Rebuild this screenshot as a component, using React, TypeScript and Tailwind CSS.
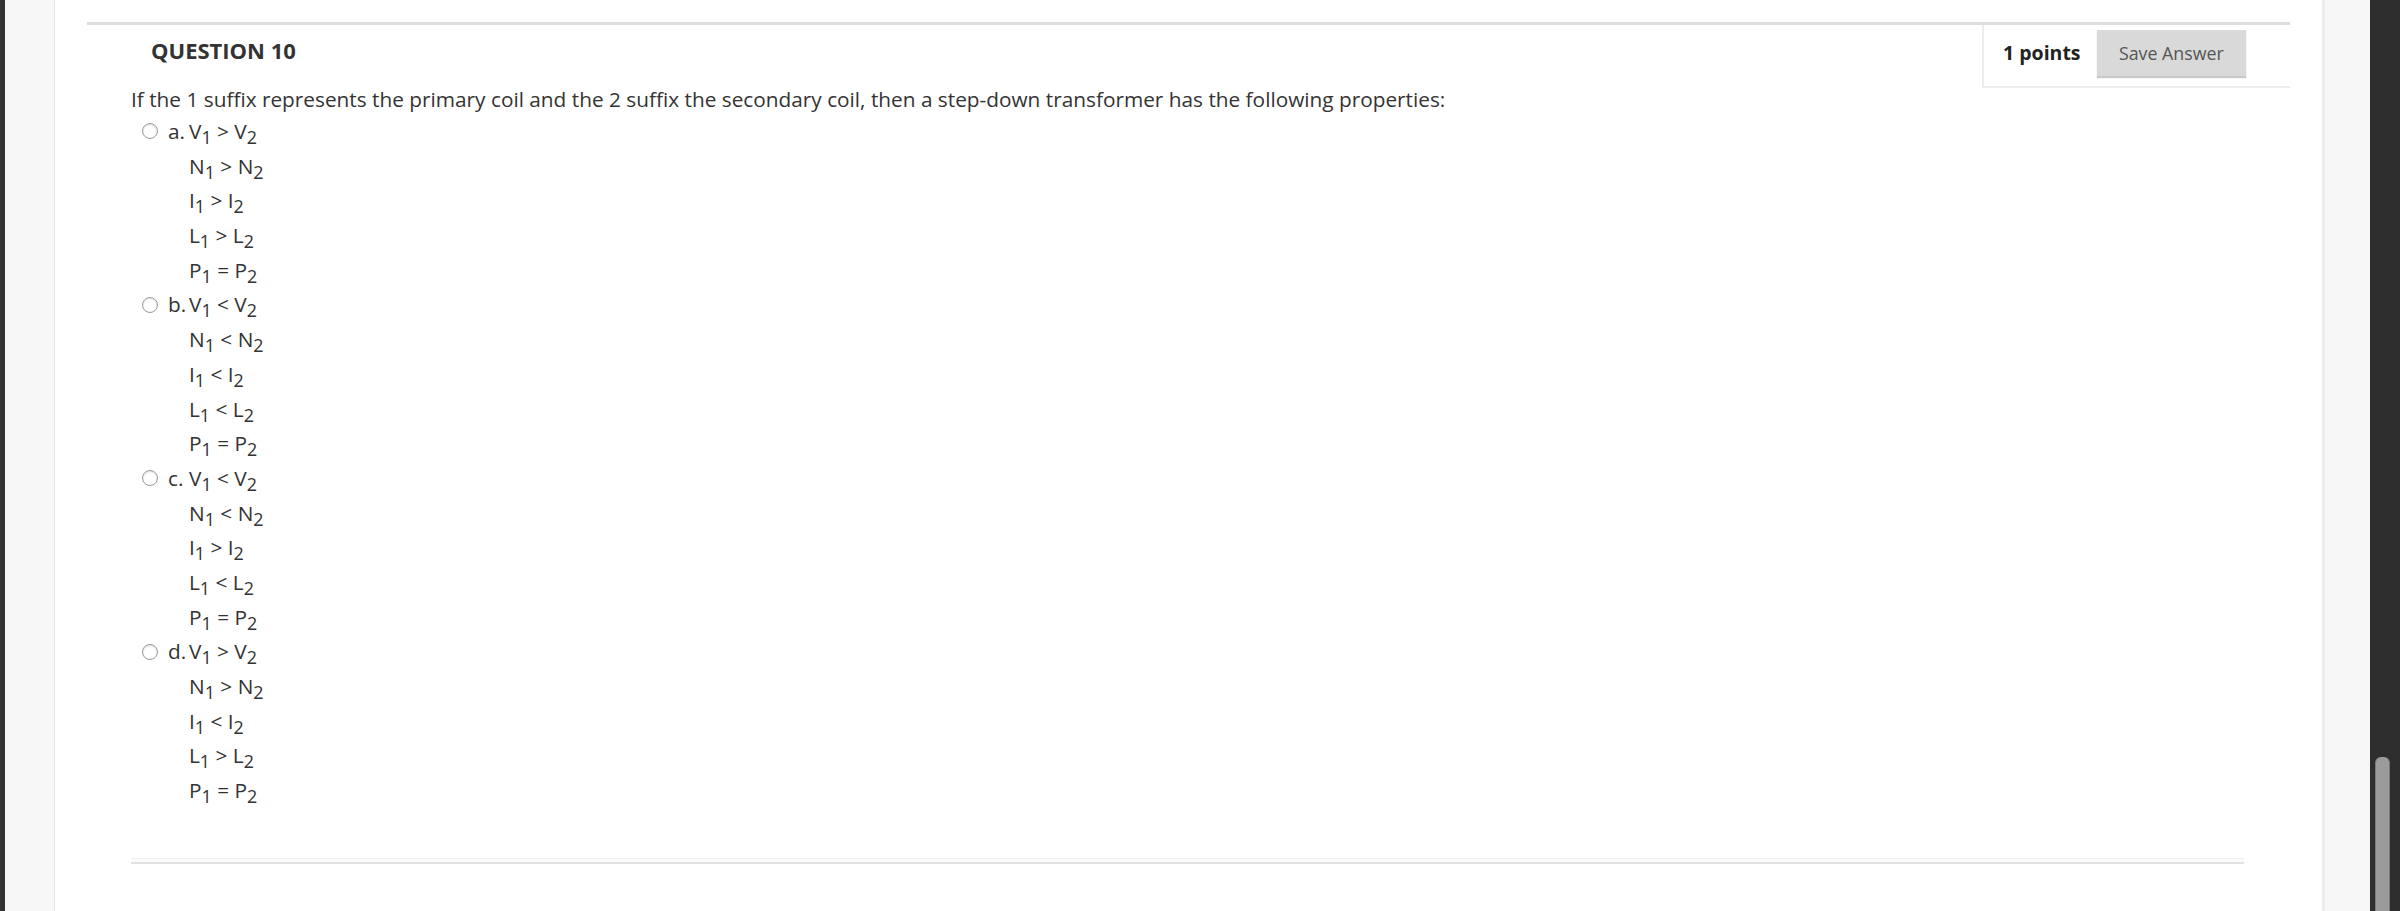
import React from 'react';

type Opt = { label: string; lines: [string, string, string][] };

const options: Opt[] = [
  { label: 'a.', lines: [['V', '>', 'V'], ['N', '>', 'N'], ['I', '>', 'I'], ['L', '>', 'L'], ['P', '=', 'P']] },
  { label: 'b.', lines: [['V', '<', 'V'], ['N', '<', 'N'], ['I', '<', 'I'], ['L', '<', 'L'], ['P', '=', 'P']] },
  { label: 'c.', lines: [['V', '<', 'V'], ['N', '<', 'N'], ['I', '>', 'I'], ['L', '<', 'L'], ['P', '=', 'P']] },
  { label: 'd.', lines: [['V', '>', 'V'], ['N', '>', 'N'], ['I', '<', 'I'], ['L', '>', 'L'], ['P', '=', 'P']] },
];

// subscript digits sit low and fairly large, like the reference
const Sub: React.FC<{ n: string }> = ({ n }) => (
  <span className="relative top-[0.28em] text-[0.86em]">{n}</span>
);

const Line: React.FC<{ parts: [string, string, string] }> = ({ parts }) => (
  <div className="h-[34.7px] leading-[34.7px] whitespace-nowrap">
    {parts[0]}
    <Sub n="1" /> {parts[1]} {parts[2]}
    <Sub n="2" />
  </div>
);

const App: React.FC = () => {
  return (
    <div className="flex h-[911px] w-full overflow-hidden bg-[#f7f7f7] font-['Open_Sans',sans-serif] text-[#333]">
      <div className="w-[5px] shrink-0 bg-[#333]" />
      <div className="w-[50px] shrink-0 bg-[#f7f7f7] border-r border-[#e4e4e4]" />

      <main className="flex-1 bg-white border-r-[3px] border-[#ececec] pt-[22px] px-[32px]">
        <div className="border-t-[3px] border-[#dedede]">
          <div className="flex items-start justify-between h-[60px]">
            <h2 className="pl-[64px] pt-[10px] text-[22px] leading-[30px] font-bold text-[#333]">QUESTION 10</h2>
            <div className="flex items-start h-[63px] w-[308px] border-l-2 border-b-2 border-[#ececec] pt-[5px] pl-[19px] pr-[44px] gap-[16px]">
              <span className="text-[19.5px] leading-[46px] font-bold text-[#222]">1 points</span>
              <button className="h-[46px] flex-1 bg-[#d9d9d9] text-[17.8px] text-[#555] shadow-[0_2px_1px_#c9c9c9]">Save Answer</button>
            </div>
          </div>

          <div className="pl-[44px] pr-[46px]">
            <p className="text-[20.8px] leading-[28px] text-[#333] whitespace-nowrap">
              If the 1 suffix represents the primary coil and the 2 suffix the secondary coil, then a step-down transformer has the following properties:
            </p>

            <div className="text-[20.8px] text-[#333] mt-[1px]">
              {options.map((o) => (
                <div key={o.label} className="flex items-start">
                  <div className="h-[34.7px] flex items-center pl-[11px] pr-[10px]">
                    <span className="block w-[16px] h-[16px] rounded-full border border-[#9a9a9a] bg-white shadow-[inset_0_1px_2px_#ddd]" />
                  </div>
                  <div className="w-[21px] h-[34.7px] leading-[34.7px]">{o.label}</div>
                  <div>
                    {o.lines.map((l, i) => (
                      <Line key={i} parts={l} />
                    ))}
                  </div>
                </div>
              ))}
            </div>

            <div className="mt-[50px] h-[6px] border-t border-[#f0f0f0] border-b-2 border-b-[#e2e2e2] bg-[#fafafa]" />
          </div>
        </div>
      </main>

      <div className="w-[45px] shrink-0 bg-[#f7f7f7]" />
      <div className="relative w-[30px] shrink-0 bg-[#2e2e2e]">
        <div className="absolute left-[5px] top-[757px] w-[15px] h-[200px] rounded-t-[6px] bg-[#9b9b9b] border-x border-[#7a7a7a]" />
      </div>
    </div>
  );
};

export default App;
